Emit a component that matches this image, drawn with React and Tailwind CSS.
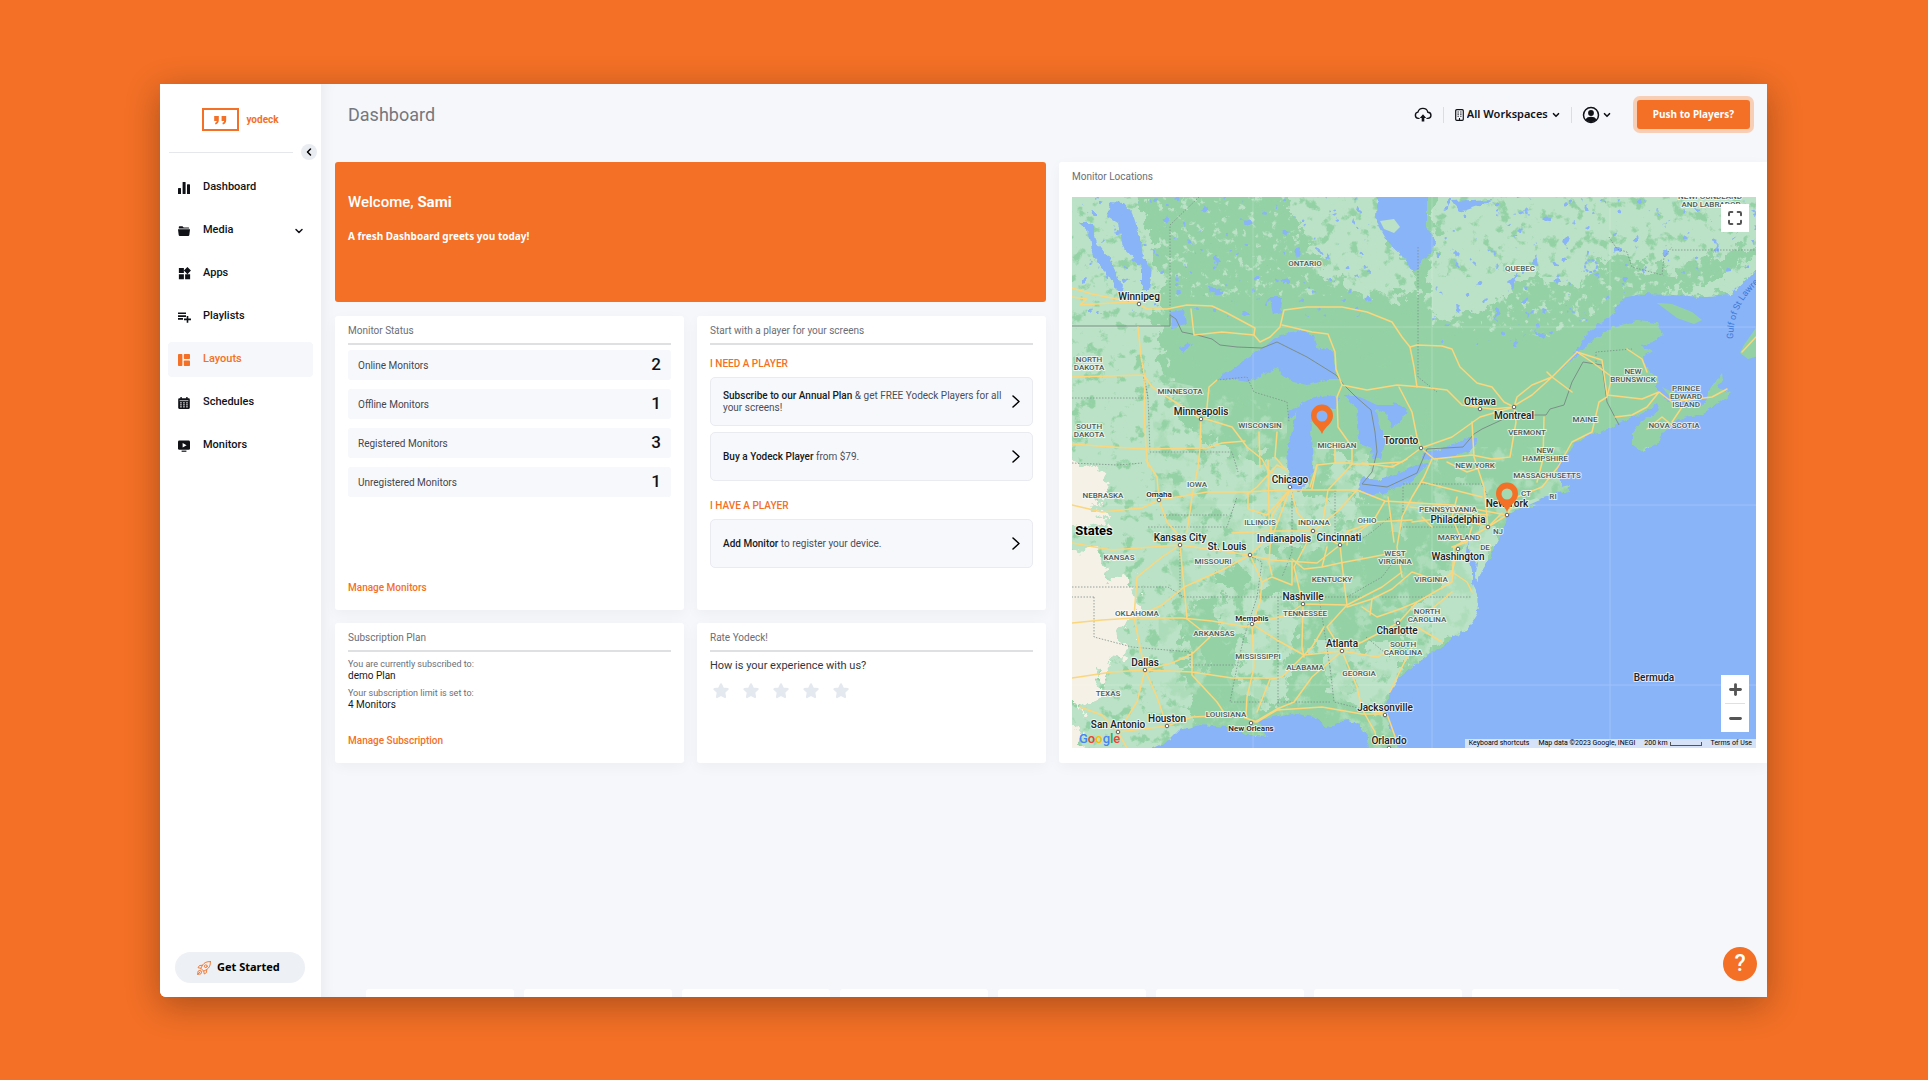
import React, { useState } from 'react';
import { ChevronDown, ChevronLeft, Maximize, Plus, Minus } from 'lucide-react';
import { MdWidgets } from 'react-icons/md';

/* ---------- icons ---------- */

const BarsIcon = () => (
  <svg viewBox="0 0 12 12" className="h-3 w-3" fill="currentColor">
    <rect x="0" y="6" width="3" height="6" rx="0.6" />
    <rect x="4.6" y="0" width="3" height="12" rx="0.6" />
    <rect x="9" y="2.2" width="3" height="9.8" rx="0.6" />
  </svg>
);

const FolderIcon = () => (
  <svg viewBox="0 0 12 12" className="h-3 w-3" fill="currentColor">
    <path d="M.8 3.6V2.200C.8 1.600 1.200 1.200 1.800 1.200h2.700l1.200 1.200h4.500c.6 0 1 .4 1 1v.2z" />
    <path d="M0 4.300h12l-.7 5.800c-.1.500-.5.900-1 .9H1.700c-.5 0-.9-.4-1-.9z" />
  </svg>
);

const PlaylistIcon = () => (
  <svg viewBox="0 0 13 12" className="h-3 w-[13px]" fill="none" stroke="currentColor" strokeWidth="1.600">
    <path d="M0 2.300h8M0 5.100h8M0 7.900h5M6 8.400h7M9.500 5v6.800" />
  </svg>
);

const LayoutIcon = () => (
  <svg viewBox="0 0 12 12" className="h-3 w-3" fill="currentColor">
    <rect x="0" y="0" width="4.4" height="12" rx="0.8" />
    <rect x="5.8" y="0" width="6.2" height="5" rx="0.8" />
    <rect x="5.8" y="6.4" width="6.2" height="5.6" rx="0.8" />
  </svg>
);

const CalendarIcon = () => (
  <svg viewBox="0 0 12 12" className="h-3 w-3">
    <path d="M2.4 0h1.4v1.2h4.4V0h1.4v1.2h1c.7 0 1.2.5 1.2 1.2v8.4c0 .7-.5 1.2-1.2 1.2H1.4C.7 12 .2 11.500.2 10.800V2.400C.2 1.700.7 1.200 1.400 1.200h1z" fill="currentColor" />
    <g fill="#fff">
      <rect x="1.600" y="3.400" width="8.800" height="0.700" />
      {[2.2, 5.2, 8.2].map((x) => [5.3, 7.3, 9.3].map((y) => (
        <rect key={`${x}-${y}`} x={x} y={y} width="1.500" height="1.100" />
      )))}
    </g>
  </svg>
);

const MonitorIcon = () => (
  <svg viewBox="0 0 12 12" className="h-3 w-3">
    <rect x="0" y="0.600" width="12" height="9.200" rx="1.400" fill="currentColor" />
    <path d="M3.600 11.200h4.800" stroke="currentColor" strokeWidth="1.200" />
    <path d="M4.600 2.900v4.600l4-2.300z" fill="#fff" />
  </svg>
);

const CloudIcon = () => (
  <svg viewBox="0 0 18 18" className="h-[18px] w-[18px]" fill="none" stroke="currentColor" strokeWidth="1.400" strokeLinecap="round">
    <path d="M5 12.400H4.200A3.200 3.200 0 0 1 3.900 6.100 5.200 5.200 0 0 1 13.900 6.200 3.100 3.100 0 0 1 13.800 12.400H13" />
    <path d="M9 8.200l3.200 3.700h-1.900v3.600H7.700v-3.600H5.800z" fill="currentColor" stroke="none" />
  </svg>
);

const BuildingIcon = () => (
  <svg viewBox="0 0 9 12" className="h-3 w-[9px]" fill="none" stroke="currentColor">
    <rect x="0.700" y="0.700" width="7.600" height="10.600" rx="1" strokeWidth="1.200" />
    <path d="M2.500 3h1.300M5.200 3h1.300M2.500 5.100h1.300M5.200 5.100h1.300M2.500 7.200h1.300M5.200 7.200h1.300M4.500 9v2" strokeWidth="1.100" />
  </svg>
);

const UserIcon = () => (
  <svg viewBox="0 0 18 18" className="h-[18px] w-[18px]">
    <circle cx="9" cy="9" r="7.500" fill="none" stroke="currentColor" strokeWidth="1.500" />
    <circle cx="9" cy="7" r="2.900" fill="currentColor" />
    <path d="M3.600 13.500c1-2.200 3-2.800 5.400-2.800s4.400.6 5.400 2.800A7.300 7.300 0 0 1 9 16.200a7.300 7.300 0 0 1-5.400-2.700z" fill="currentColor" />
  </svg>
);

const RocketIcon = () => (
  <svg viewBox="0 0 14 14" className="h-3.5 w-3.5" fill="none" stroke="#f37026" strokeWidth="0.900" strokeLinejoin="round" strokeLinecap="round">
    <path d="M13.400.6c-3.600-.2-6 .9-8 3.700L3.900 7.300l2.800 2.800 3-1.500c2.800-2 3.900-4.400 3.700-8z" />
    <circle cx="8.800" cy="5.200" r="1.400" />
    <path d="M5.400 4.300L2.500 4.500 1 6.700l2.900.6M9.700 8.600l-.2 2.900L7.300 13l-.6-2.900M3.800 9.200l-2.700.9-.5 3.300 3.300-.5.900-2.700M.8 13.200l2.400-2.400" />
  </svg>
);

const ArrowIcon = () => (
  <svg viewBox="0 0 8 13" className="h-[13px] w-2" fill="none" stroke="#000" strokeWidth="1.500" strokeLinecap="round" strokeLinejoin="round">
    <path d="M1 1l6 5.500L1 12" />
  </svg>
);

const StarIcon = ({ className }) => (
  <svg viewBox="0 0 18 18" className={`h-[18px] w-[18px] ${className}`} fill="currentColor" stroke="currentColor" strokeWidth="2" strokeLinejoin="round">
    <path d="M9 2.200l2 4.300 4.700.6-3.400 3.300.8 4.700L9 12.800l-4.100 2.300.8-4.700L2.300 7.100 7 6.500z" />
  </svg>
);

const Logo = () => (
  <div className="flex items-center gap-[7px] text-[#f37026]">
    <svg viewBox="0 0 37 23" className="h-[23px] w-[37px]">
      <rect x="1" y="1" width="35" height="21" fill="none" stroke="currentColor" strokeWidth="2" />
      <path d="M12.200 8h4.600v4.200c0 2.200-1.200 3.700-3.300 4.200l-.5-1.400c1-.3 1.600-.9 1.700-1.900h-2.500zM19.600 8h4.600v4.200c0 2.200-1.200 3.700-3.300 4.200l-.5-1.400c1-.3 1.600-.9 1.700-1.900h-2.500z" fill="currentColor" />
    </svg>
    <span className="text-[10px] font-bold">yodeck</span>
  </div>
);

/* ---------- data ---------- */

const menu = [
  { label: 'Dashboard', icon: <BarsIcon /> },
  { label: 'Media', icon: <FolderIcon />, sub: true },
  { label: 'Apps', icon: <MdWidgets size={15} className="-mx-px" /> },
  { label: 'Playlists', icon: <PlaylistIcon /> },
  { label: 'Layouts', icon: <LayoutIcon />, active: true },
  { label: 'Schedules', icon: <CalendarIcon /> },
  { label: 'Monitors', icon: <MonitorIcon /> },
];

const statuses = [
  ['Online Monitors', 2],
  ['Offline Monitors', 1],
  ['Registered Monitors', 3],
  ['Unregistered Monitors', 1],
];

// [text, x, y] in map units, anchored at the middle
const regions = [
  ['ONTARIO', 233, 69], ['QUEBEC', 448, 74], ['MINNESOTA', 108, 197], ['WISCONSIN', 188, 231],
  ['MICHIGAN', 265, 251], ['NORTH', 17, 165], ['DAKOTA', 17, 173], ['SOUTH', 17, 232], ['DAKOTA', 17, 240],
  ['NEWFOUNDLAND', 638, 2], ['AND LABRADOR', 639, 10], ['NEW', 561, 177], ['BRUNSWICK', 561, 185],
  ['PRINCE', 614, 194], ['EDWARD', 614, 202], ['ISLAND', 614, 210], ['NOVA SCOTIA', 602, 231],
  ['MAINE', 513, 225], ['VERMONT', 455, 238], ['NEW', 473, 256], ['HAMPSHIRE', 473, 264],
  ['NEW YORK', 403, 271], ['MASSACHUSETTS', 475, 281], ['CT', 454, 299], ['RI', 481, 302],
  ['PENNSYLVANIA', 376, 315], ['NJ', 426, 337], ['MARYLAND', 387, 343], ['DE', 413, 353],
  ['VIRGINIA', 359, 385], ['WEST', 323, 359], ['VIRGINIA', 323, 367], ['NORTH', 355, 417],
  ['CAROLINA', 355, 425], ['SOUTH', 331, 450], ['CAROLINA', 331, 458], ['OHIO', 295, 326],
  ['INDIANA', 242, 328], ['ILLINOIS', 188, 328], ['IOWA', 125, 290], ['NEBRASKA', 31, 301],
  ['KANSAS', 47, 363], ['MISSOURI', 141, 367], ['KENTUCKY', 260, 385], ['TENNESSEE', 233, 419],
  ['ARKANSAS', 142, 439], ['OKLAHOMA', 65, 419], ['MISSISSIPPI', 186, 462], ['ALABAMA', 233, 473],
  ['GEORGIA', 287, 479], ['TEXAS', 36, 499], ['LOUISIANA', 154, 520],
];

const cities = [
  ['Winnipeg', 67, 103, 67, 107], ['Minneapolis', 129, 218, 129, 222], ['Ottawa', 408, 208, 408, 212],
  ['Montreal', 442, 222, 442, 210], ['Toronto', 329, 247, 349, 251], ['Chicago', 218, 286, 218, 290],
  ['Kansas City', 108, 344, 108, 348], ['St. Louis', 155, 353, 178, 358], ['Indianapolis', 212, 345, 241, 334],
  ['Cincinnati', 267, 344, 268, 348], ['Nashville', 231, 403, 231, 407], ['Charlotte', 325, 437, 326, 426],
  ['Atlanta', 270, 450, 270, 454], ['Dallas', 73, 469, 73, 473], ['Houston', 95, 525, 95, 529],
  ['San Antonio', 46, 531, 46, 535], ['Jacksonville', 313, 514, 313, 518], ['Orlando', 317, 547, 317, 551],
  ['Philadelphia', 386, 326, 416, 330], ['Washington', 386, 363, 386, 352], ['New York', 435, 310, 435, 318],
];

const smallCities = [['Omaha', 87, 300, 87, 303], ['Memphis', 180, 424, 180, 427], ['New Orleans', 179, 534, 179, 526]];

const roads = [
  'M0 91L20 97L45 102L67 104M0 100L15 102L8 108L40 106L67 105M67 107L75 112L95 112L115 108L140 109L155 116L183 131L182 138L150 135L122 138L119 112',
  'M182 138L188 145L198 140L208 130L212 113L235 110L270 110L295 115L320 125L330 140L338 150L345 148L370 149L380 152L388 170L405 186L420 190L432 205L442 210',
  'M210 128L240 135L256 137L263 155L264 172L270 188L295 193L325 188L350 190L375 193L390 208L420 212L442 210',
  'M270 188L265 200L266 230L280 250L280 266L263 266L245 268L238 290M338 150L342 170L345 190M327 190L340 215L345 240L349 251L330 265L300 267L280 267',
  'M66 130L69 160L73 182L72 215L74 250L76 270M0 180L72 178L80 190L100 203L129 222L134 222L160 230L175 250L190 262L196 273L213 285',
  'M145 183L137 190L134 220M129 222L128 250L126 270L120 300L115 335M0 247L40 250L75 252L135 251L150 246L173 244M187 235L188 270M205 235L203 260L214 273',
  'M0 308L30 315L70 311L87 303L135 295L175 295L210 293L240 293L285 293M74 263L85 280L87 303L95 325L108 340L108 348M0 346L40 353L80 350L108 348L178 358',
  'M108 348L112 390L115 422M65 380L90 360L108 348M65 380L62 420L68 450L73 473L85 500L95 529M0 426L30 423L62 421L110 421L140 424L175 430L180 427L215 418L231 407L275 408L310 390L330 375',
  'M178 358L150 373L112 390L90 408L65 420M178 358L190 385L188 405L180 427L182 470L175 500L174 518M178 358L202 335L218 292M175 358L200 363L245 366L268 348L300 325L340 323',
  'M218 290L225 315L241 334L268 348L272 385L275 408L255 430L270 454L290 445L326 426L345 405L380 385L382 350L386 352',
  'M241 334L200 334L160 336M241 334L265 315L285 293L313 304L345 306L380 308L435 318M268 348L276 334L300 326L313 304M241 334L222 370L231 407L230 450L232 460',
  'M180 427L205 443L232 458L270 454L306 460L328 445M270 454L285 490L290 512L315 517M270 454L240 480L222 505L205 512L183 525M232 458L210 480L198 482L185 515',
  'M0 481L40 475L73 473L100 466L120 457L138 440L115 422M73 473L120 475L160 481L198 481M120 455L120 478L145 505L155 520M95 529L120 520L165 518L185 525L205 513L250 510L290 517L315 517',
  'M46 535L65 505L73 473M46 535L95 529M8 510L30 518L46 535M46 535L55 551M315 517L325 545M318 495L330 470L340 450M290 512L303 535L305 548',
  'M386 352L380 375L370 385L340 375L320 392L300 402L275 410M380 375L395 385L400 395M345 430L370 445M380 395L362 410L340 425M382 350L416 330L435 318L445 300L470 290L486 270L500 245L520 235L527 205L535 200L540 180L520 165L505 155',
  'M505 155L480 180L460 188L445 200L442 210M480 180L500 195M440 210L460 198L480 180L475 175M442 210L444 225L438 260L420 262L400 258L362 262L349 251L380 240L408 220L442 210M472 220L471 262L465 285',
  'M400 225L402 260L412 290L416 330M360 262L352 280L340 300L330 320L325 350L330 380M350 285L410 300M316 300L322 345M505 155L530 163L535 198L570 202L587 195L600 205L640 200L655 192M587 195L575 210L560 218L543 220M555 152L570 162L575 175',
  'M684 140L670 155M600 225L610 210M575 232L590 220L600 228M340 325L380 320L416 330L430 316M338 310L416 318M215 273L205 268L185 290L175 297M196 263L197 320L200 340M176 296L176 312L195 318L218 292M218 292L200 318L197 366L200 378',
  'M220 365L220 388L200 380L190 385M255 350L250 370L268 366L300 360L325 355M250 370L232 372L220 362M290 410L305 420L328 412L345 405M300 402L298 418M252 430L240 450L232 458M276 334L275 348',
  'M245 268L240 292M263 245L263 266M280 267L270 278L256 293L250 330M290 266L320 270L335 262M400 330L395 345L380 350M360 330L350 320M410 270L395 275L375 265M385 300L380 320L390 345',
];

/* ---------- map ---------- */

function MapDrawing() {
  return (
    <svg viewBox="0 0 684 551" preserveAspectRatio="xMidYMid slice" className="block h-full w-full" role="img" aria-label="Map of monitor locations">
      <defs>
        <filter id="rough" x="-5%" y="-5%" width="110%" height="110%">
          <feTurbulence type="fractalNoise" baseFrequency="0.07" numOctaves="5" seed="4" />
          <feDisplacementMap in="SourceGraphic" scale="36" xChannelSelector="R" yChannelSelector="G" />
        </filter>
        <filter id="shore" x="-2%" y="-2%" width="104%" height="104%">
          <feTurbulence type="fractalNoise" baseFrequency="0.14" numOctaves="3" seed="9" />
          <feDisplacementMap in="SourceGraphic" scale="6" xChannelSelector="R" yChannelSelector="G" />
        </filter>
        <filter id="lightSpeckle" colorInterpolationFilters="sRGB">
          <feTurbulence type="fractalNoise" baseFrequency="0.12" numOctaves="4" seed="12" />
          <feColorMatrix values="0 0 0 0 0.733  0 0 0 0 0.886  0 0 0 0 0.776  9 0 0 0 -5.4" />
          <feComposite operator="in" in2="SourceGraphic" />
        </filter>
        <filter id="softSpeckle" colorInterpolationFilters="sRGB">
          <feTurbulence type="fractalNoise" baseFrequency="0.05" numOctaves="5" seed="22" />
          <feColorMatrix values="0 0 0 0 0.675  0 0 0 0 0.863  0 0 0 0 0.725  7 0 0 0 -3.7" />
          <feComposite operator="in" in2="SourceGraphic" />
        </filter>
        <filter id="darkSpeckle" colorInterpolationFilters="sRGB">
          <feTurbulence type="fractalNoise" baseFrequency="0.08" numOctaves="5" seed="31" />
          <feColorMatrix values="0 0 0 0 0.58  0 0 0 0 0.824  0 0 0 0 0.647  0 8 0 0 -4.7" />
          <feComposite operator="in" in2="SourceGraphic" />
        </filter>
        <filter id="ponds" colorInterpolationFilters="sRGB">
          <feTurbulence type="fractalNoise" baseFrequency="0.1" numOctaves="3" seed="7" />
          <feColorMatrix values="0 0 0 0 0.541  0 0 0 0 0.706  0 0 0 0 0.973  0 0 20 0 -14" />
          <feComposite operator="in" in2="SourceGraphic" />
        </filter>
        <path id="gulfPath" d="M661 142C661 118 670 98 694 80" />
      </defs>

      <rect width="684" height="551" fill="#94d2a5" />

      {/* lighter, drier land */}
      <g filter="url(#rough)" fill="#bbe2c6">
        <path d="M-20 -20H60L90 90L85 140L100 190L110 230L170 260L215 262L240 300L285 305L280 330L240 350L200 350L190 390L180 440L150 430L130 400L110 430L120 520L90 570H-20z" />
        <path d="M205 -20H310L312 30L345 78L335 100L290 95L255 75L235 45z" />
        <path d="M355 -20H700V40L640 60L590 75L540 60L500 90L450 80L420 110L370 125L350 100L365 60z" />
        <path d="M180 400L215 395L225 420L215 500L190 510L165 490z" />
        <path d="M240 440L290 450L330 440L330 480L310 520L285 510L250 480z" />
        <path d="M255 255L300 262L290 300L260 310z" />
        <path d="M330 430L375 375L400 335L425 330L410 430L350 460z" />
        <path d="M600 98L660 100L690 78L690 60L640 85z" />
      </g>
      <path d="M85 0H310V60L345 80V100H90zM360 60L684 40V110H540L480 140L360 130z" fill="#000" filter="url(#lightSpeckle)" />
      <path d="M80 180L215 210V250H684V551H90z" fill="#000" filter="url(#softSpeckle)" />
      <path d="M0 0H684V80H360V551H0z" fill="#000" filter="url(#darkSpeckle)" />
      <g filter="url(#rough)" fill="#f5f1e6">
        <path d="M-20 255L22 268L36 288L20 308L38 322L20 332L-20 330z" />
        <path d="M-20 345L25 352L35 372L66 390L70 408L50 425L55 450L25 475L30 500L10 512L-20 505z" />
        <path d="M-20 520L8 530L15 560H-20z" />
      </g>
      <g filter="url(#rough)" fill="#94d2a5">
        <path d="M150 370L175 372L182 395L160 400L145 388z" />
        <path d="M130 440L158 450L160 475L130 478z" />
        <path d="M290 340L330 335L345 315L350 345L330 385L300 395L285 375z" />
        <path d="M355 260L400 262L405 275L370 285z" />
      </g>
      <path d="M10 0H300V120H10zM360 0H684V70L560 90L480 150L360 150z" fill="#000" filter="url(#ponds)" />

      {/* water */}
      <g fill="#8ab4f8" filter="url(#shore)">
        <path d="M700 60L684 73L658 98L635 100L598 98L571 97L555 100L545 108L541 118L525 128L515 136L505 153L495 166L481 180L508 156L521 143L541 130L565 124L585 126L590 138L581 145L568 148L581 155L571 158L573 170L586 180L585 193L595 203L605 208L631 210L638 193L650 176L651 183L646 191L660 196L648 206L631 216L605 223L591 236L585 246L571 255L561 248L561 236L571 223L588 213L585 206L571 216L551 225L538 231L528 236L515 238L505 246L491 260L486 270L488 282L488 290L498 288L498 294L485 296L471 300L450 306L465 308L438 315L433 320L435 323L428 340L421 353L418 360L410 373L405 386L403 380L406 366L398 356L396 343L395 356L400 373L400 386L405 396L406 416L395 433L381 440L371 450L358 456L345 466L328 480L318 496L313 513L318 530L326 543L328 570H700z" />
        <path d="M298 570L296 540L288 528L275 523L255 530L241 520L221 516L201 520L185 524L195 540L175 538L155 530L128 528L108 533L98 543L70 556V570z" />
        <path d="M305 -10L304 25L316 46L331 60L341 75L347 73L350 61L361 55L363 43L355 30V-10z" />
        <path d="M145 183L168 166L188 153L208 138L228 133L241 138L245 150L260 153L263 170L266 183L255 183L235 188L221 185L208 176L206 170L191 178L175 185L165 183z" />
        <path d="M218 213L235 203L255 198L266 201L265 210L251 210L241 216L238 236L240 250L241 270L238 283L228 295L218 290L215 273L216 250L221 230L226 213L216 226z" />
        <path d="M271 196L288 200L308 203L325 206L335 213L331 223L321 230L313 216L305 213L308 230L313 243L308 263L301 263L298 250L288 246L285 230L286 213L278 206z" />
        <path d="M286 293L291 280L308 283L328 276L348 266L357 267L345 278L341 283L315 295L298 299z" />
        <path d="M350 263L353 255L375 250L395 240L405 241L401 253L378 260z" />
        <path d="M38 5L51 6L60 16L68 40L71 60L80 73L77 93L70 93L70 70L51 50L46 26L36 20z" />
        <path d="M6 26L21 26L25 46L38 63L51 90L48 98L38 80L21 60L17 36z" />
        <path d="M198 100L210 100L209 116L201 118z" />
        <path d="M98 115L112 113L114 128L100 132zM107 150L120 146L112 156zM135 90L150 92L145 98z" />
        <path d="M435 85L446 75L440 92zM460 134L475 138L472 142zM388 15L410 8L420 2L380 4z" />
      </g>
      {/* islands */}
      <g fill="#94d2a5">
        <path d="M585 106L600 107L620 115L630 123L622 127L605 121z" />
        <path d="M590 190L598 194L610 198L624 198L626 202L612 204L598 200z" />
        <path d="M690 122L672 148L668 156L676 162L690 158z" />
        <path d="M308 24L322 22L328 30L322 36L312 32z" fill="#bbe2c6" />
        <path d="M288 200L318 203L322 208L305 208z" />
        <path d="M434 314L450 306L465 301L468 303L452 310z" fill="#bbe2c6" />
      </g>
      <circle cx="519" cy="69" r="6" fill="none" stroke="#8ab4f8" strokeWidth="2" strokeDasharray="3 1" />

      {/* graticule */}
      <path d="M0 130H684M0 308H684M0 488H684M181 0V551M360 0V551M538 0V551" stroke="#fff" strokeWidth="1" opacity="0.18" />

      {/* borders */}
      <g fill="none" stroke="#7b8f88" strokeWidth="0.800">
        <path strokeWidth="1" d="M0 129H98V118L104 122L110 135L125 138L140 142L148 148L165 150L190 151L205 145L235 160L264 178L272 188L284 200L299 213L303 235L305 255L300 275L290 287L315 290L345 276L355 252L391 250L402 237L410 232L436 220L442 218L474 218L478 212L492 208L500 185L511 165L530 168L535 205L547 228" />
        <path strokeDasharray="1.500 1.500" d="M98 118V28L127 0M0 201H76L69 160L72 182L76 200L78 255H160L166 275M0 266L45 268L70 266M76 330H155L165 300M88 318H155M0 390H96L112 400M22 400H0M22 400V440L60 450L118 455V468H165M108 350V400H180L275 400L290 400M180 360L190 365L185 400L172 440L165 470L158 505H195M206 400V512M258 505H206M258 470L262 505L290 512M258 470L247 400M294 440L318 460M220 295V355L210 380M263 293V340M263 340L285 345L300 335L318 320M331 290V320M331 287H410L416 300M331 330H400M275 400L310 380L325 360M310 400H400M145 183L175 180L182 195L215 205L217 225M346 50V180L365 195M537 40L545 52L555 55L560 70L590 78L592 60L600 50M600 53H684M524 168V155L560 152" />
      </g>

      <g fill="none" stroke="#fbd67c" strokeWidth="1.500" strokeLinejoin="round" strokeLinecap="round">
        {roads.map((d) => <path key={d} d={d} />)}
      </g>

      {/* labels */}
      <g textAnchor="middle" stroke="#fff" strokeOpacity="0.7" strokeWidth="2" strokeLinejoin="round" paintOrder="stroke">
        <g className="text-[8px] font-medium" fill="#4d5b57">
          {regions.map(([name, x, y]) => <text key={`${name}-${x}-${y}`} x={x} y={y}>{name}</text>)}
        </g>
        <g className="text-[10px] font-medium" fill="#202124">
          {cities.map(([name, x, y]) => <text key={name} x={x} y={y}>{name}</text>)}
          <text x="582" y="484">Bermuda</text>
        </g>
        <g className="text-[8px] font-medium" fill="#202124">
          {smallCities.map(([name, x, y]) => <text key={name} x={x} y={y}>{name}</text>)}
        </g>
        <text x="22" y="338" className="text-[13px] font-bold" fill="#000">States</text>
      </g>
      <g fill="#fff" stroke="#5f5f5f">
        {[...cities, ...smallCities].map(([name, , , x, y]) => <circle key={name} cx={x} cy={y} r="1.800" />)}
      </g>
      <text className="text-[9px]" fill="#3c78d8">
        <textPath href="#gulfPath">Gulf of St Lawrence</textPath>
      </text>

      {[[250, 237], [435, 315]].map(([x, y]) => (
        <g key={x} transform={`translate(${x} ${y})`}>
          <path d="M0 0C-3-8-11-10-11-18.500A11 11 0 0 1 11-18.500C11-10 3-8 0 0z" fill="#f37026" />
          <circle cy="-18" r="5.500" fill={x === 250 ? '#8ab4f8' : '#a5d9b2'} />
        </g>
      ))}
    </svg>
  );
}

/* ---------- layout pieces ---------- */

function Card({ title, children, className = '' }) {
  return (
    <section className={`flex flex-col rounded-[3px] bg-white px-[13px] pb-3 shadow-[0_4px_14px_rgba(0,0,0,0.04)] ${className}`}>
      <h2 className="border-b-2 border-[#dfe0e2] pt-2 pb-[5px] text-[10px] leading-[14px] text-[#6b6e76]">{title}</h2>
      {children}
    </section>
  );
}

function PlayerLink({ strong, children }) {
  return (
    <a href="#player" className="flex h-[49px] items-center justify-between rounded-[5px] border border-[#eaebf0] bg-[#f7f8fc] px-3 text-[10px] leading-3 text-[#4b4e57]">
      <span className="max-w-[280px]"><span className="font-medium text-[#16181d]">{strong}</span> {children}</span>
      <ArrowIcon />
    </a>
  );
}

function Sidebar() {
  return (
    <aside className="flex w-[161px] shrink-0 flex-col bg-white">
      <div className="flex justify-center pt-6"><Logo /></div>
      <div className="mt-[13px] mb-2.5 flex items-center justify-end gap-2 pr-1">
        <span className="ml-[9px] h-px flex-1 bg-[#e6e7ea]" />
        <button aria-label="Collapse menu" className="flex h-4 w-4 items-center justify-center rounded-full bg-[#e9ecf1] text-black">
          <ChevronLeft size={12} strokeWidth={3} />
        </button>
      </div>
      <nav className="flex flex-col gap-2 px-2">
        {menu.map((m) => (
          <a key={m.label} href={`#${m.label.toLowerCase()}`} className={`flex h-[35px] items-center rounded-sm px-2.5 text-[11px] font-medium ${m.active ? 'bg-[#f6f7fa] text-[#f37026]' : 'text-[#101218]'}`}>
            <span className="flex w-[25px]">{m.icon}</span>
            {m.label}
            {m.sub && <ChevronDown size={12} strokeWidth={3} className="-mr-0.5 ml-auto" />}
          </a>
        ))}
      </nav>
      <button className="mt-auto mb-[14px] ml-[15px] flex h-[31px] w-[130px] items-center gap-1.5 rounded-full bg-[#edf0f4] pl-[22px] font-['Noto_Sans'] text-[11px] font-bold text-black">
        <RocketIcon /> Get Started
      </button>
    </aside>
  );
}

function Header() {
  return (
    <header className="flex h-[61px] items-center pr-[17px] pl-[27px]">
      <h1 className="text-[18px] font-normal text-[#75777d]">Dashboard</h1>
      <div className="ml-auto flex items-center font-['Noto_Sans'] text-[#101218]">
        <button aria-label="Upload"><CloudIcon /></button>
        <span className="mx-[11px] h-4 w-px bg-[#dcdde1]" />
        <label className="flex items-center gap-[3px] text-[11px] font-semibold">
          <BuildingIcon />
          <select aria-label="Workspace" className="appearance-none bg-transparent outline-none">
            <option>All Workspaces</option>
          </select>
          <ChevronDown size={10} strokeWidth={4} />
        </label>
        <span className="mx-2.5 h-4 w-px bg-[#dcdde1]" />
        <button aria-label="Account" className="flex items-center gap-0.5">
          <UserIcon />
          <ChevronDown size={10} strokeWidth={4} />
        </button>
        <button className="ml-[25px] h-[29px] rounded-[3px] bg-[#f37026] px-4 text-[10px] font-bold text-white ring-4 ring-[#f8ceb5]">
          Push to Players?
        </button>
      </div>
    </header>
  );
}

function MapCard() {
  return (
    <section className="flex flex-col rounded-l-[3px] bg-white pr-[11px] pb-[15px] pl-[13px] shadow-[0_4px_14px_rgba(0,0,0,0.04)]">
      <h2 className="pt-2 pb-[13px] text-[10px] leading-[14px] text-[#6b6e76]">Monitor Locations</h2>
      <div className="relative min-h-0 flex-1 overflow-hidden">
        <div className="absolute inset-0"><MapDrawing /></div>
        <button aria-label="Full screen" className="absolute top-[7px] right-[7px] flex h-7 w-7 items-center justify-center bg-white text-[#555]">
          <Maximize size={16} strokeWidth={3} />
        </button>
        <div className="absolute right-[7px] bottom-4 flex w-7 flex-col items-center bg-white text-[#555]">
          <button aria-label="Zoom in" className="flex h-7 w-7 items-center justify-center"><Plus size={17} strokeWidth={4} /></button>
          <span className="h-px w-5 bg-[#e0e0e0]" />
          <button aria-label="Zoom out" className="flex h-7 w-7 items-center justify-center"><Minus size={17} strokeWidth={4} /></button>
        </div>
        <div className="absolute bottom-0 left-[7px] text-[13px] leading-[18px] font-medium">
          <span className="text-[#4285f4]">G</span><span className="text-[#ea4335]">o</span><span className="text-[#fbbc04]">o</span><span className="text-[#4285f4]">g</span><span className="text-[#34a853]">l</span><span className="text-[#ea4335]">e</span>
        </div>
        <div className="absolute right-0 bottom-0 flex h-[9px] items-center gap-[9px] bg-[#d5e2f8] px-1 text-[7px] leading-[9px] text-black">
          <button>Keyboard shortcuts</button>
          <span>Map data ©2023 Google, INEGI</span>
          <span className="flex items-center gap-0.5">200 km <span className="h-1 w-8 border-x border-b border-[#555]" /></span>
          <a href="#terms">Terms of Use</a>
        </div>
      </div>
    </section>
  );
}

function Rating() {
  const [rate, setRate] = useState(0);
  return (
    <fieldset>
      <legend className="pt-1.5 text-[11px] leading-4 text-[#33363d]">How is your experience with us?</legend>
      <div className="mt-2 flex gap-3 pl-0.5">
        {[1, 2, 3, 4, 5].map((n) => (
          <label key={n} className="cursor-pointer">
            <input type="radio" name="rate" className="sr-only" aria-label={`${n} stars`} checked={rate === n} onChange={() => setRate(n)} />
            <StarIcon className={n <= rate ? 'text-[#f37026]' : 'text-[#e4e9f0]'} />
          </label>
        ))}
      </div>
    </fieldset>
  );
}

export default function App() {
  return (
    <div className="flex h-screen min-h-[900px] bg-[#f37026] pt-[84px] pr-[161px] pb-[83px] pl-40 font-['Roboto',sans-serif]">
      <div className="relative flex flex-1 overflow-hidden rounded-bl-md bg-[#f6f7fb] shadow-[0_8px_34px_rgba(0,0,0,0.3)]">
        <Sidebar />
        <main className="flex min-w-0 flex-1 flex-col shadow-[inset_10px_0_14px_-8px_rgba(0,0,0,0.06)]">
          <Header />
          <div className="mt-[17px] grid grid-cols-[711fr_708fr] gap-[13px] pl-3.5">
            <div className="flex flex-col">
              <section className="h-[140px] rounded-[3px] bg-[#f37026] px-[13px] pt-7 text-white">
                <h2 className="text-[15px] leading-6 font-medium">Welcome, <span className="font-bold">Sami</span></h2>
                <p className="mt-3 font-['Noto_Sans'] text-[10px] leading-5 font-bold">A fresh Dashboard greets you today!</p>
              </section>

              <div className="mt-3.5 grid grid-cols-2 gap-[13px]">
                <Card title="Monitor Status" className="h-[294px]">
                  <dl className="mt-[5px] flex flex-col gap-[9px]">
                    {statuses.map(([label, value]) => (
                      <div key={label} className="flex h-[30px] items-center justify-between rounded-[3px] bg-[#f7f8fc] px-2.5">
                        <dt className="text-[10px] text-[#43464e]">{label}</dt>
                        <dd className="text-[17px] font-medium text-[#101218]">{value}</dd>
                      </div>
                    ))}
                  </dl>
                  <a href="#monitors" className="mt-auto text-[10px] leading-5 font-medium text-[#f37026]">Manage Monitors</a>
                </Card>

                <Card title="Start with a player for your screens" className="h-[294px]">
                  <h3 className="pt-3 pb-1.5 text-[10px] leading-[14px] font-medium text-[#f37026]">I NEED A PLAYER</h3>
                  <div className="flex flex-col gap-1.5">
                    <PlayerLink strong="Subscribe to our Annual Plan">&amp; get FREE Yodeck Players for all your screens!</PlayerLink>
                    <PlayerLink strong="Buy a Yodeck Player">from $79.</PlayerLink>
                  </div>
                  <h3 className="pt-[18px] pb-1.5 text-[10px] leading-[14px] font-medium text-[#f37026]">I HAVE A PLAYER</h3>
                  <PlayerLink strong="Add Monitor">to register your device.</PlayerLink>
                </Card>

                <Card title="Subscription Plan" className="h-[140px]">
                  <dl className="pt-[7px]">
                    <dt className="text-[9px] leading-[11px] text-[#6b6e76]">You are currently subscribed to:</dt>
                    <dd className="text-[10px] leading-3 text-[#16181d]">demo Plan</dd>
                    <dt className="mt-1.5 text-[9px] leading-[11px] text-[#6b6e76]">Your subscription limit is set to:</dt>
                    <dd className="text-[10px] leading-3 text-[#16181d]">4 Monitors</dd>
                  </dl>
                  <a href="#subscription" className="mt-auto text-[10px] leading-5 font-medium text-[#f37026]">Manage Subscription</a>
                </Card>

                <Card title="Rate Yodeck!" className="h-[140px]">
                  <Rating />
                </Card>
              </div>
            </div>
            <MapCard />
          </div>

          {/* top edge of the next row of tiles */}
          <div className="mt-auto flex gap-2.5 pr-[147px] pl-[45px]">
            {Array.from({ length: 8 }, (_, i) => <div key={i} className="h-2 flex-1 rounded-t-[3px] bg-white" />)}
          </div>
        </main>

        <button aria-label="Help" className="absolute right-2.5 bottom-4 flex h-[34px] w-[34px] items-center justify-center rounded-full bg-[#f37026] text-[23px] font-medium text-white">?</button>
      </div>
    </div>
  );
}
